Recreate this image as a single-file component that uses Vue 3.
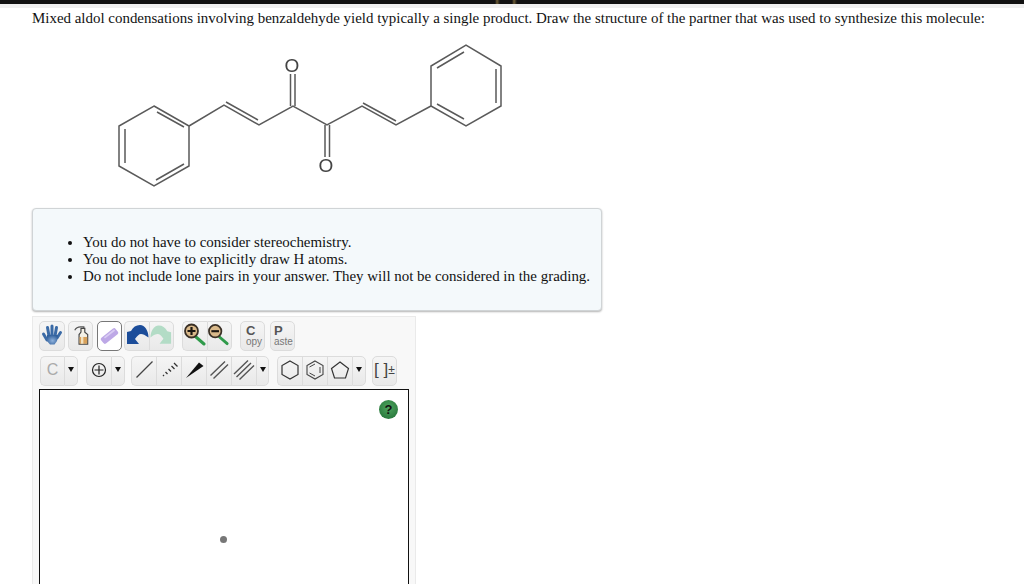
<script setup>
const hints = [
  "You do not have to consider stereochemistry.",
  "You do not have to explicitly draw H atoms.",
  "Do not include lone pairs in your answer. They will not be considered in the grading.",
];

const bonds = [
  // left ring
  "M154 106 189 126 189 166 154 186 119 166 119 126Z",
  "M125 129V163M157 112 184 127M156 180 184 164",
  // chain
  "M189 126 224 105 259 125 293 106 327 125 362 106 396 125 431 106",
  "M226 102 258 120M363 103 396 121",
  // right ring
  "M431 106V66L466 45 501 66V106L466 126Z",
  "M437 68 464 52M496 69V103M437 104 464 119",
  // carbonyls
  "M290.5 74V106M295 74V106M325 125V157M329.5 125V157",
];

const undoPath = "M2 9V21H14L10 16C12 13 14 11 16 11C18 11 20 12 23.500 14.500C23.500 8 20 2 15 2C11 2 8 4 6 8Z";
</script>

<template>
  <div class="page">
    <div class="top-bar"></div>
    <div class="top-strip"></div>
    <p class="question">
      Mixed aldol condensations involving benzaldehyde yield typically a single product. Draw the structure of the partner that was used to synthesize this molecule:
    </p>

    <svg class="molecule" width="600" height="180" viewBox="0 28 600 180">
      <path v-for="(d, i) in bonds" :key="i" :d="d" fill="none" stroke="#5a5a5a" stroke-width="1.5" />
      <text x="292" y="72" class="atom">O</text>
      <text x="326" y="172" class="atom">O</text>
    </svg>

    <div class="info-box">
      <ul>
        <li v-for="hint in hints" :key="hint">{{ hint }}</li>
      </ul>
    </div>

    <section class="editor">
      <div class="row row-top">
        <div class="tool hand">
          <svg width="24" height="24" viewBox="0 0 24 24">
            <defs>
              <radialGradient id="hand-fill" cx="50%" cy="60%" r="60%">
                <stop offset="0" stop-color="#8fb2dc" />
                <stop offset="1" stop-color="#31609c" />
              </radialGradient>
            </defs>
            <path fill="none" stroke="#3a6aa6" stroke-width="3" stroke-linecap="round" d="M3.5 10 7 16M7.5 3.500 9 12M12 2V12M16.500 3.500 15 12M20.500 8.500 17 14" />
            <path fill="url(#hand-fill)" d="M7 11H18L17 17 14.500 20.500H10L7 17Z" />
          </svg>
        </div>
        <div class="tool bottle">
          <svg width="24" height="28" viewBox="0 0 24 28">
            <path d="M6 8C7 6 9 4.500 12 4.500H15.500V10" fill="none" stroke="#555" stroke-width="1.200" />
            <path d="M12.500 6H16.500V10L19.500 12.500V22.500H10.500V12.500L12.500 10Z" fill="#f4f1e6" stroke="#444" stroke-width="1.200" />
            <rect x="11" y="15" width="8" height="7" fill="#d8a15a" />
            <rect x="12.500" y="15" width="2.500" height="7" fill="#f3e2c0" />
          </svg>
        </div>
        <div class="tool eraser selected">
          <svg width="25" height="24" viewBox="0 0 25 24">
            <rect x="2.500" y="8" width="20" height="8" rx="2" transform="rotate(-38 12.500 12)" fill="#bda8e6" />
            <path d="M7 14 18 5.500" stroke="#d9ccf3" stroke-width="1.800" />
          </svg>
        </div>
        <div class="group undo-group">
          <div class="tool">
            <svg width="24" height="26" viewBox="0 0 24 26">
              <path :d="undoPath" fill="#1c4d9a" />
            </svg>
          </div>
          <div class="tool">
            <svg width="24" height="26" viewBox="0 0 24 26">
              <path :d="undoPath" transform="matrix(-1 0 0 1 24 0)" fill="#b3dcc6" />
            </svg>
          </div>
        </div>
        <div class="group zoom-group">
          <div class="tool">
            <svg width="24" height="26" viewBox="0 0 24 26">
              <path d="M13 14 21 21" stroke="#2f9a4a" stroke-width="3" stroke-linecap="round" />
              <circle cx="8.500" cy="8" r="6.500" fill="#d9b98a" stroke="#3a3026" stroke-width="1.800" />
              <path d="M4.500 8H12.500M8.500 4V12" stroke="#1c1712" stroke-width="2.200" />
            </svg>
          </div>
          <div class="tool">
            <svg width="24" height="26" viewBox="0 0 24 26">
              <path d="M12 14 20 21" stroke="#2f9a4a" stroke-width="3" stroke-linecap="round" />
              <circle cx="7.500" cy="8" r="6.500" fill="#d9b98a" stroke="#3a3026" stroke-width="1.800" />
              <path d="M3.500 8H11.500" stroke="#1c1712" stroke-width="2.200" />
            </svg>
          </div>
        </div>
        <div class="tool word copy">
          <b>C</b>
          <span>opy</span>
        </div>
        <div class="tool word paste">
          <b>P</b>
          <span>aste</span>
        </div>
      </div>

      <div class="row row-bottom">
        <div class="group">
          <div class="tool element">C</div>
          <div class="tool caret"></div>
        </div>
        <div class="group plus-group">
          <div class="tool">
            <svg width="20" height="20" viewBox="0 0 20 20">
              <circle cx="10" cy="10" r="6.500" fill="none" stroke="#222" stroke-width="1.200" />
              <path d="M5.500 10H14.500M10 5.500V14.500" stroke="#222" stroke-width="1.200" />
            </svg>
          </div>
          <div class="tool caret"></div>
        </div>
        <div class="group bond-group">
          <div class="tool">
            <svg width="22" height="22" viewBox="0 0 22 22">
              <path d="M3.500 18.500 19.500 2.500" stroke="#444" stroke-width="1.300" />
            </svg>
          </div>
          <div class="tool">
            <svg width="22" height="22" viewBox="0 0 22 22">
              <path d="M5 16 6 17M7.500 13 9.500 15M10.500 10 13 12.500M13.500 7 16.500 10M16 4 19.500 7.500" stroke="#333" stroke-width="1.300" />
            </svg>
          </div>
          <div class="tool">
            <svg width="22" height="22" viewBox="0 0 22 22">
              <path d="M3 19 16 3.500 20.500 7Z" fill="#111" />
            </svg>
          </div>
          <div class="tool">
            <svg width="22" height="22" viewBox="0 0 22 22">
              <path d="M2.500 16.500 17 2.500M5.500 19.500 20 5.500" stroke="#555" stroke-width="1.400" />
            </svg>
          </div>
          <div class="tool">
            <svg width="22" height="22" viewBox="0 0 22 22">
              <path d="M1 15 15 1.500M3.500 18 18 4M6.500 20.500 21 6.500" stroke="#555" stroke-width="1.400" />
            </svg>
          </div>
          <div class="tool caret narrow"></div>
        </div>
        <div class="group ring-group">
          <div class="tool">
            <svg width="22" height="22" viewBox="0 0 22 22">
              <path d="M11 2 19 6.500V15.500L11 20 3 15.500V6.500Z" fill="none" stroke="#333" stroke-width="1.200" />
            </svg>
          </div>
          <div class="tool">
            <svg width="22" height="22" viewBox="0 0 22 22">
              <path d="M11 2 19 6.500V15.500L11 20 3 15.500V6.500Z" fill="none" stroke="#444" stroke-width="1.100" />
              <path d="M5.500 8 11 5M16 8V14M5.500 14 11 17" fill="none" stroke="#444" stroke-width="1" />
            </svg>
          </div>
          <div class="tool">
            <svg width="22" height="22" viewBox="0 0 22 22">
              <path d="M11 3 19.500 9.500 16.500 19H5.500L2.500 9.500Z" fill="none" stroke="#333" stroke-width="1.200" />
            </svg>
          </div>
          <div class="tool caret"></div>
        </div>
        <div class="tool bracket">[ ]<sup>±</sup></div>
      </div>

      <div class="canvas">
        <div class="help">?</div>
        <div class="dot"></div>
      </div>
    </section>
  </div>
</template>

<style>
html,
body {
  margin: 0;
  background: #fff;
}
</style>

<style scoped>
.page {
  position: relative;
  width: 1024px;
  height: 584px;
  overflow: hidden;
  background: #fff;
  font-family: "Liberation Serif", serif;
  color: #111;
}

.top-bar {
  height: 4px;
  background: linear-gradient(90deg, #111 0 495px, #6b5a34 497px, #111 500px, #111 512px, #6b5a34 514px, #111 517px);
}

.top-strip {
  height: 4px;
  background: #efefef;
}

.question {
  margin: 0;
  padding-left: 32px;
  height: 20px;
  font-size: 14.95px;
  line-height: 20px;
  white-space: nowrap;
}

.molecule {
  display: block;
  filter: blur(0.3px);
}

.atom {
  font-family: "Liberation Sans", sans-serif;
  font-size: 19px;
  fill: #444;
  text-anchor: middle;
}

.info-box {
  box-sizing: border-box;
  width: 570px;
  height: 103px;
  margin-left: 32px;
  padding-top: 25px;
  background: #f4f9fb;
  border: 1px solid #d0d4d6;
  border-radius: 4px;
  box-shadow: 0 1px 2px rgba(0, 0, 0, 0.3);
  font-size: 14.95px;
  line-height: 17px;
}

.info-box ul {
  margin: 0;
  padding-left: 50px;
}

.editor {
  box-sizing: border-box;
  width: 384px;
  height: 300px;
  margin: 5px 0 0 32px;
  padding: 4px 0 0 6px;
  background: #f8f8f8;
  border: 1px solid #eaeaea;
}

.row {
  display: flex;
  height: 30px;
}

.row-bottom {
  margin-top: 5px;
}

.tool {
  box-sizing: border-box;
  display: flex;
  align-items: center;
  justify-content: center;
  flex: none;
  width: 25px;
  height: 30px;
  background: linear-gradient(#f5f5f5, #e9e9e9);
  border: 1px solid #dcdcdc;
  border-radius: 5px;
}

.tool svg {
  filter: blur(0.3px);
}

.row-bottom .tool {
  padding-bottom: 3px;
}

.group {
  display: flex;
  flex: none;
}

.group .tool {
  border-radius: 0;
  border-right-width: 0;
}

.group .tool:first-child {
  border-radius: 5px 0 0 5px;
}

.group .tool:last-child {
  border-right-width: 1px;
  border-radius: 0 5px 5px 0;
}

.hand {
  width: 26px;
}

.bottle {
  margin-left: 3px;
}

.eraser {
  margin-left: 4px;
}

.selected {
  background: #fff;
  border-color: #777;
}

.undo-group {
  margin-left: 2px;
}

.zoom-group {
  margin-left: 8px;
}

.word {
  flex-direction: column;
  align-items: flex-start;
  justify-content: flex-start;
  padding-top: 2px;
  font-family: "Liberation Sans", sans-serif;
  color: #555;
}

.word b {
  font-size: 13px;
  line-height: 13px;
}

.word span {
  font-size: 10px;
  line-height: 10px;
  color: #777;
}

.copy {
  margin-left: 8px;
  padding-left: 5px;
}

.paste {
  margin-left: 5px;
  padding-left: 3px;
}

.row-bottom > .group:first-child {
  margin-left: 1px;
}

.element {
  width: 24px;
  font-family: "Liberation Sans", sans-serif;
  font-size: 16px;
  color: #aaa;
}

.caret {
  width: 14px;
}

.narrow {
  width: 13px;
}

.caret::after {
  content: "";
  border-left: 3.5px solid transparent;
  border-right: 3.5px solid transparent;
  border-top: 5px solid #111;
}

.plus-group {
  margin-left: 8px;
}

.bond-group {
  margin-left: 6px;
}

.ring-group {
  margin-left: 8px;
}

.bracket {
  margin-left: 6px;
  font-family: "Liberation Sans", sans-serif;
  font-size: 17px;
  color: #444;
  white-space: nowrap;
}

.bracket sup {
  font-size: 12px;
  line-height: 0;
}

.canvas {
  position: relative;
  box-sizing: border-box;
  width: 370px;
  height: 260px;
  margin-top: 3px;
  background: #fff;
  border: 1px solid #111;
}

.help {
  position: absolute;
  top: 10px;
  right: 10px;
  width: 19px;
  height: 19px;
  border-radius: 50%;
  background: radial-gradient(circle at 50% 40%, #4fa65f, #1f6b33);
  font-family: "Liberation Sans", sans-serif;
  font-size: 13px;
  font-weight: bold;
  line-height: 19px;
  text-align: center;
  color: #111;
}

.dot {
  position: absolute;
  top: 146px;
  left: 180px;
  width: 7px;
  height: 7px;
  border-radius: 50%;
  background: #777;
}
</style>
